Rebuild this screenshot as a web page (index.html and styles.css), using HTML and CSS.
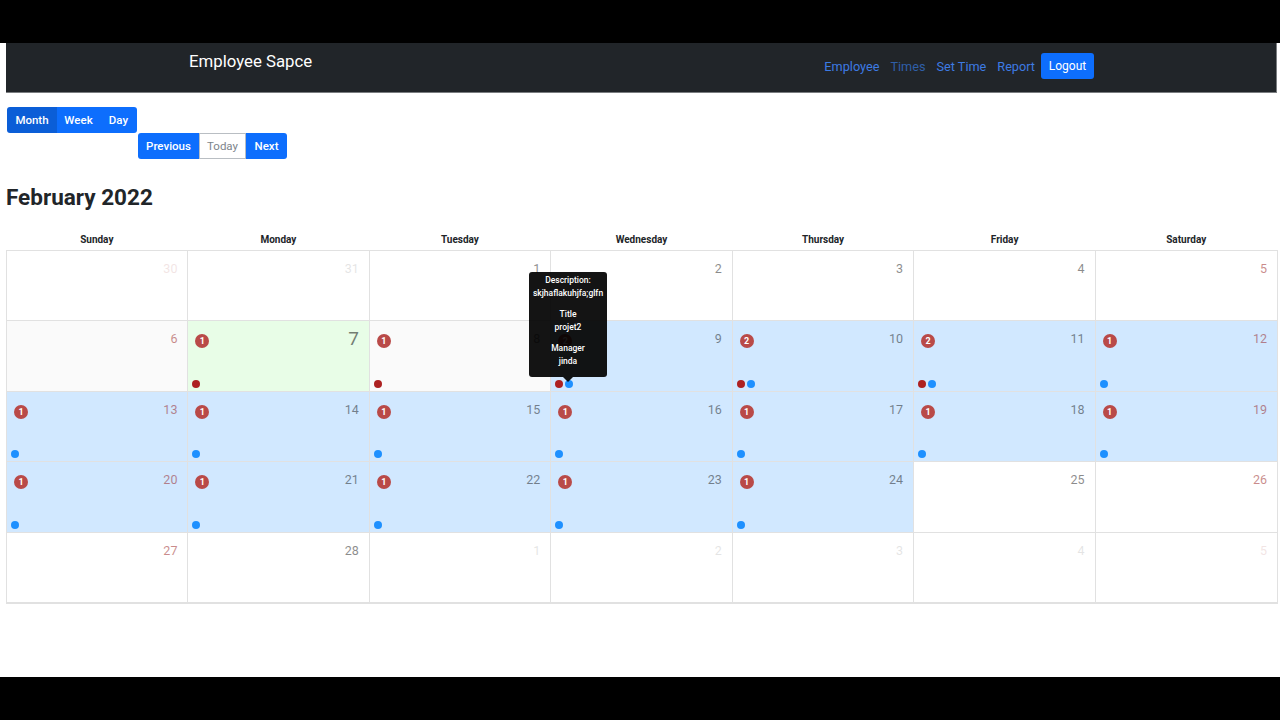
FILE: index.html
```html
<!DOCTYPE html>
<html>
<head>
<meta charset="utf-8">
<link rel="stylesheet" href="styles.css">
</head>
<body>
<div class="screen">
  <div class="letterbox"></div>
  <div class="page">
    <nav class="navbar">
      <div class="brand">Employee Sapce</div>
      <div class="nav-links">
        <a class="nav-link">Employee</a>
        <a class="nav-link dim">Times</a>
        <a class="nav-link">Set Time</a>
        <a class="nav-link">Report</a>
        <button class="btn-logout">Logout</button>
      </div>
    </nav>

    <div class="controls">
      <div class="btn-group">
        <span class="btn active">Month</span><span class="btn">Week</span><span class="btn">Day</span>
      </div>
      <div class="btn-group second">
        <span class="btn">Previous</span><span class="btn outline">Today</span><span class="btn">Next</span>
      </div>
    </div>

    <h1 class="title">February 2022</h1>

    <div class="calendar">
      <div class="cal-header">
        <div>Sunday</div><div>Monday</div><div>Tuesday</div><div>Wednesday</div><div>Thursday</div><div>Friday</div><div>Saturday</div>
      </div>
      <div class="cal-days">
        <div class="cal-row">
          <div class="cell off weekend"><div class="top"><span class="num">30</span></div></div>
          <div class="cell off"><div class="top"><span class="num">31</span></div></div>
          <div class="cell"><div class="top"><span class="num">1</span></div></div>
          <div class="cell"><div class="top"><span class="num">2</span></div></div>
          <div class="cell"><div class="top"><span class="num">3</span></div></div>
          <div class="cell"><div class="top"><span class="num">4</span></div></div>
          <div class="cell weekend"><div class="top"><span class="num">5</span></div></div>
        </div>
        <div class="cal-row hover">
          <div class="cell weekend"><div class="top"><span class="num">6</span></div></div>
          <div class="cell today"><div class="top"><span class="badge">1</span><span class="num">7</span></div><div class="events"><i class="dot red"></i></div></div>
          <div class="cell"><div class="top"><span class="badge">1</span><span class="num">8</span></div><div class="events"><i class="dot red"></i></div></div>
          <div class="cell blue"><div class="top"><span class="badge">2</span><span class="num">9</span></div><div class="events"><i class="dot red"></i><i class="dot bl"></i></div></div>
          <div class="cell blue"><div class="top"><span class="badge">2</span><span class="num">10</span></div><div class="events"><i class="dot red"></i><i class="dot bl"></i></div></div>
          <div class="cell blue"><div class="top"><span class="badge">2</span><span class="num">11</span></div><div class="events"><i class="dot red"></i><i class="dot bl"></i></div></div>
          <div class="cell blue weekend"><div class="top"><span class="badge">1</span><span class="num">12</span></div><div class="events"><i class="dot bl"></i></div></div>
        </div>
        <div class="cal-row">
          <div class="cell blue weekend"><div class="top"><span class="badge">1</span><span class="num">13</span></div><div class="events"><i class="dot bl"></i></div></div>
          <div class="cell blue"><div class="top"><span class="badge">1</span><span class="num">14</span></div><div class="events"><i class="dot bl"></i></div></div>
          <div class="cell blue"><div class="top"><span class="badge">1</span><span class="num">15</span></div><div class="events"><i class="dot bl"></i></div></div>
          <div class="cell blue"><div class="top"><span class="badge">1</span><span class="num">16</span></div><div class="events"><i class="dot bl"></i></div></div>
          <div class="cell blue"><div class="top"><span class="badge">1</span><span class="num">17</span></div><div class="events"><i class="dot bl"></i></div></div>
          <div class="cell blue"><div class="top"><span class="badge">1</span><span class="num">18</span></div><div class="events"><i class="dot bl"></i></div></div>
          <div class="cell blue weekend"><div class="top"><span class="badge">1</span><span class="num">19</span></div><div class="events"><i class="dot bl"></i></div></div>
        </div>
        <div class="cal-row">
          <div class="cell blue weekend"><div class="top"><span class="badge">1</span><span class="num">20</span></div><div class="events"><i class="dot bl"></i></div></div>
          <div class="cell blue"><div class="top"><span class="badge">1</span><span class="num">21</span></div><div class="events"><i class="dot bl"></i></div></div>
          <div class="cell blue"><div class="top"><span class="badge">1</span><span class="num">22</span></div><div class="events"><i class="dot bl"></i></div></div>
          <div class="cell blue"><div class="top"><span class="badge">1</span><span class="num">23</span></div><div class="events"><i class="dot bl"></i></div></div>
          <div class="cell blue"><div class="top"><span class="badge">1</span><span class="num">24</span></div><div class="events"><i class="dot bl"></i></div></div>
          <div class="cell"><div class="top"><span class="num">25</span></div></div>
          <div class="cell weekend"><div class="top"><span class="num">26</span></div></div>
        </div>
        <div class="cal-row">
          <div class="cell weekend"><div class="top"><span class="num">27</span></div></div>
          <div class="cell"><div class="top"><span class="num">28</span></div></div>
          <div class="cell off"><div class="top"><span class="num">1</span></div></div>
          <div class="cell off"><div class="top"><span class="num">2</span></div></div>
          <div class="cell off"><div class="top"><span class="num">3</span></div></div>
          <div class="cell off"><div class="top"><span class="num">4</span></div></div>
          <div class="cell off weekend"><div class="top"><span class="num">5</span></div></div>
        </div>
        <div class="tooltip">
          <p>Description:<br>skjhaflakuhjfa;glfn</p>
          <p>Title<br>projet2</p>
          <p>Manager<br>jinda</p>
        </div>
      </div>
    </div>
  </div>
  <div class="letterbox bottom"></div>
</div>
</body>
</html>
```

FILE: styles.css
```css
* { box-sizing: border-box; }
html, body { margin: 0; padding: 0; background: #fff; }
body { font-family: Roboto, "Liberation Sans", Arial, sans-serif; color: #212529; }

.screen { width: 1280px; height: 720px; display: flex; flex-direction: column; overflow: hidden; }
.letterbox { height: 43px; background: #000; flex: none; }
.letterbox.bottom { margin-top: auto; }
.page { padding: 0 3px 0 6px; flex: 1; }

.navbar {
  height: 50px; background: #212529; border-bottom: 1px solid #7a7d80;
  border-right: 1px solid #7a7d80;
  display: flex; align-items: flex-start; position: relative;
}
.brand { color: #fff; font-size: 16.8px; margin-left: 183px; margin-top: 8px; line-height: 20px; }
.nav-links { margin-left: auto; margin-right: 182px; display: flex; align-items: center; margin-top: 10px; }
.nav-link { color: #3d7be3; font-size: 12.7px; margin-right: 11px; line-height: 25px; }
.nav-link.dim { color: #2f5fa8; }
.btn-logout {
  background: #0d6efd; color: #fff; border: 0; border-radius: 3px;
  font-family: inherit; font-size: 12px; font-weight: 400; height: 26px; width: 53px; padding: 0;
  margin-left: -5px;
}

.controls { padding-top: 14px; }
.btn-group { display: flex; width: max-content; border-radius: 3px; overflow: hidden; margin-left: 1px; }
.btn-group.second { margin-left: 132px; }
.btn {
  background: #0d6efd; color: #fff; font-size: 11.5px; font-weight: 500;
  height: 26px; line-height: 26px; padding: 0 8px; text-align: center;
}
.btn-group:first-child .btn:nth-child(1) { width: 50px; padding: 0; }
.btn-group:first-child .btn:nth-child(2) { width: 43px; padding: 0; }
.btn-group:first-child .btn:nth-child(3) { width: 37px; padding: 0; }
.btn-group.second .btn:nth-child(1) { width: 61px; padding: 0; }
.btn-group.second .btn:nth-child(2) { width: 47px; padding: 0; }
.btn-group.second .btn:nth-child(3) { width: 41px; padding: 0; }
.btn.active { background: #0b5ed7; }
.btn.outline { background: #fff; color: #7d848b; border: 1px solid #b9bec3; line-height: 24px; font-weight: 400; }

.title { font-size: 22.5px; font-weight: 700; margin: 24px 0 0 0; line-height: 28px; color: #212529; }

.calendar { margin-top: 20px; }
.cal-header { display: grid; grid-template-columns: repeat(7, 1fr); height: 19px; width: 1271px; }
.cal-header div { text-align: center; font-size: 10px; font-weight: 700; line-height: 18px; }

.cal-days { position: relative; width: 1272px; border: 1px solid #e1e1e1; }
.cal-row { display: grid; grid-template-columns: repeat(7, 1fr); height: 70.4px; border-bottom: 1px solid #e1e1e1; }
.cal-row:last-of-type { border-bottom: 0; }
.cell { border-right: 1px solid #e1e1e1; display: flex; flex-direction: column; background: #fff; }
.cell:last-child { border-right: 0; }
.cal-row.hover .cell { background: #fafafa; }
.cal-row .cell.blue { background: #d1e8ff; }
.cal-row .cell.today { background: #e8fde7; }

.top { display: flex; align-items: flex-start; }
.num { margin-left: auto; margin-right: 10px; margin-top: 10px; font-size: 12.5px; line-height: 15px; color: #000; opacity: 0.45; }
.weekend .num { color: #8b0000; }
.off .num { opacity: 0.1; }
.today .num { font-size: 19px; line-height: 20px; margin-top: 8px; opacity: 0.5; }
.badge {
  margin-top: 13px; margin-left: 7px; width: 14px; height: 14px; border-radius: 7px;
  background: #b94a48; color: #fff; font-size: 9px; font-weight: 700; line-height: 14px; text-align: center;
}
.events { margin-top: auto; margin-left: 3px; margin-bottom: 2px; display: flex; }
.dot { display: block; width: 8px; height: 8px; border-radius: 50%; margin: 1px; }
.dot.red { background: #ad2121; }
.dot.bl { background: #1e90ff; }

.tooltip {
  position: absolute; left: 522px; top: 21px; width: 78px; height: 105px;
  background: rgba(0,0,0,0.92); border-radius: 3px; color: #fff; text-align: center;
  font-size: 8.5px; font-weight: 500; line-height: 12.8px; padding-top: 2px;
}
.tooltip p { margin: 0 0 8.5px 0; }
.tooltip::after {
  content: ""; position: absolute; left: 34px; bottom: -5px;
  border-left: 5px solid transparent; border-right: 5px solid transparent; border-top: 5px solid rgba(0,0,0,0.92);
}
```
